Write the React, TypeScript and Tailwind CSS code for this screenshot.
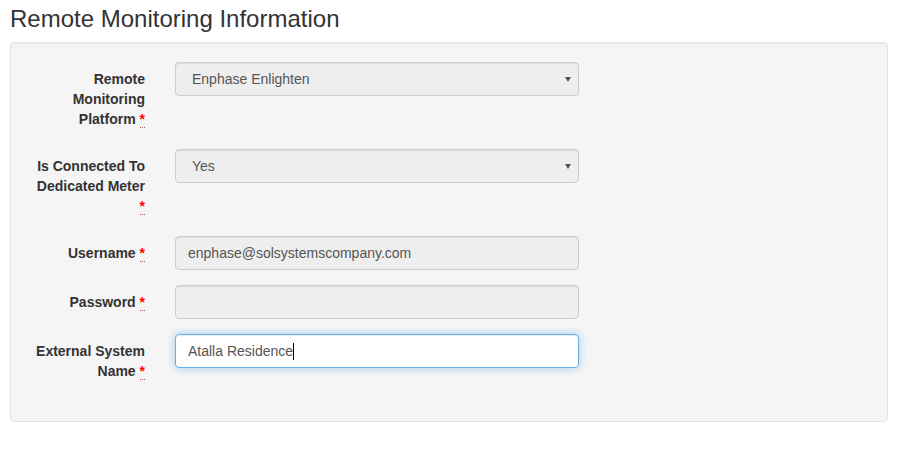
const fields = [
  { label: ["Remote Monitoring Platform"], kind: "select", value: "Enphase Enlighten" },
  { label: ["Is Connected To Dedicated Meter"], kind: "select", value: "Yes" },
  { label: ["Username"], kind: "readonly", value: "enphase@solsystemscompany.com" },
  { label: ["Password"], kind: "readonly", value: "" },
  { label: ["External System Name"], kind: "focus", value: "Atalla Residence" },
];

function Req() {
  return (
    <abbr title="required" className="text-[#ff0000] no-underline border-b border-dotted border-[#b55]">
      *
    </abbr>
  );
}

function Caret() {
  return (
    <svg width="6" height="5" viewBox="0 0 6 5" className="absolute right-[7px] top-[14px]">
      <polygon points="0,0 6,0 3,5" fill="#555" />
    </svg>
  );
}

export default function App() {
  return (
    <div className="min-h-screen bg-white font-['Liberation_Sans',Arial,sans-serif] text-[#333] text-[14px]">
      <h3 className="ml-[10px] pt-[6px] h-[32px] text-[24px] leading-[26px] font-normal">
        Remote Monitoring Information
      </h3>

      {/* Well */}
      <div className="ml-[10px] mt-[10px] w-[878px] rounded border border-[#e3e3e3] bg-[#f5f5f5] px-[19px] pt-[19px] pb-[20px] shadow-[inset_0_1px_1px_rgba(0,0,0,0.05)]">
        {fields.map((f, i) => (
          <div key={i} className="mb-[15px] flex items-start">
            <label className="w-[115px] shrink-0 pt-[7px] pb-[5px] text-right font-bold leading-5">
              {f.label[0]} <Req />
            </label>
            <div className="ml-[30px] w-[404px]">
              {f.kind === "select" && (
                <div className="relative h-[34px] rounded border border-[#ccc] bg-[#eee] pl-[16px] leading-[32px] text-[#555] shadow-[inset_0_1px_1px_rgba(0,0,0,0.075)]">
                  {f.value}
                  <Caret />
                </div>
              )}
              {f.kind === "readonly" && (
                <div className="h-[34px] rounded border border-[#ccc] bg-[#eee] pl-[12px] leading-[32px] text-[#555] shadow-[inset_0_1px_1px_rgba(0,0,0,0.075)]">
                  {f.value}
                </div>
              )}
              {f.kind === "focus" && (
                <div className="flex h-[34px] items-center rounded border border-[#66afe9] bg-white pl-[12px] text-[#555] shadow-[inset_0_1px_1px_rgba(0,0,0,0.075),0_0_8px_rgba(102,175,233,0.6)]">
                  <span>{f.value}</span>
                  <span className="inline-block h-[17px] w-px bg-black" />
                </div>
              )}
            </div>
          </div>
        ))}
      </div>
    </div>
  );
}
